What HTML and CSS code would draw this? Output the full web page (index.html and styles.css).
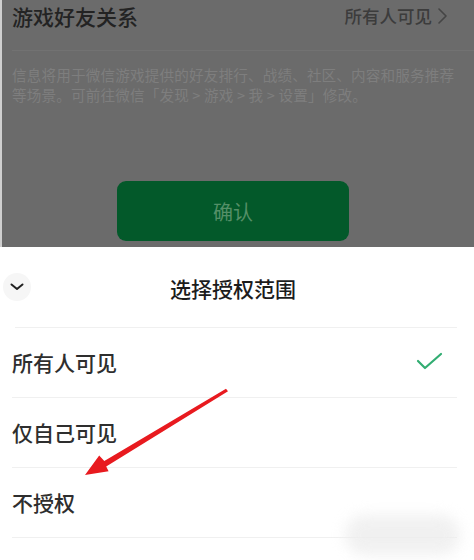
FILE: index.html
```html
<!DOCTYPE html>
<html lang="zh-CN">
<head>
<meta charset="utf-8">
<title>选择授权范围</title>
<link rel="stylesheet" href="styles.css">
</head>
<body>
<div class="screen">
  <section class="backdrop">
    <div class="setting-row">
      <span class="setting-title">游戏好友关系</span>
      <span class="setting-value">所有人可见 <svg class="caret" width="9" height="16" viewBox="0 0 9 16"><polyline points="1,1 8,8 1,15" fill="none" stroke="#454545" stroke-width="1.6" stroke-linecap="round" stroke-linejoin="round"/></svg></span>
    </div>
    <div class="setting-line"></div>
    <p class="setting-desc">信息将用于微信游戏提供的好友排行、战绩、社区、内容和服务推荐<br>等场景。可前往微信「发现 &gt; 游戏 &gt; 我 &gt; 设置」修改。</p>
    <div class="confirm-wrap">
      <div class="confirm-btn">确认</div>
    </div>
  </section>

  <section class="sheet">
    <div class="sheet-header">
      <div class="collapse">
        <svg width="14" height="8" viewBox="0 0 14 8"><polyline points="1.5,1.5 7,6 12.5,1.5" fill="none" stroke="#222" stroke-width="2" stroke-linecap="round" stroke-linejoin="round"/></svg>
      </div>
      <div class="sheet-title">选择授权范围</div>
      <div class="spacer"></div>
    </div>
    <div class="header-line"></div>
    <div class="option">
      <span>所有人可见</span>
      <svg class="check" width="28" height="20" viewBox="0 0 28 20"><polyline points="2,9 9,16 25,2" fill="none" stroke="#32ad72" stroke-width="2.2" stroke-linecap="round" stroke-linejoin="round"/></svg>
    </div>
    <div class="option"><span>仅自己可见</span></div>
    <div class="option"><span>不授权</span></div>
  </section>

  <div class="watermark"></div>

  <svg class="annotation" width="474" height="560" viewBox="0 0 474 560">
    <polygon points="226,388.8 104.3,460.9 99.2,455.6 85,475 108.6,471.3 106.2,466.4 228,391.2" fill="#e81a1f"/>
  </svg>
</div>
</body>
</html>
```

FILE: styles.css
```css
* { box-sizing: border-box; }

html, body {
  margin: 0;
  padding: 0;
  background: #ffffff;
}

body {
  font-family: "Noto Sans CJK SC", "Noto Sans", sans-serif;
}

.screen {
  position: relative;
  width: 474px;
  height: 560px;
  overflow: hidden;
  background: #ffffff;
}

.backdrop {
  height: 247px;
  background: #6b6b6b;
  border-left: 2px solid #cfcfcf;
  display: flex;
  flex-direction: column;
}

.setting-row {
  display: flex;
  justify-content: space-between;
  align-items: center;
  height: 32px;
  padding: 0 27px 0 10px;
}

.setting-title {
  font-size: 21px;
  line-height: 32px;
  font-weight: 500;
  color: #232323;
}

.setting-value {
  font-size: 17.5px;
  line-height: 32px;
  font-weight: 500;
  color: #3c3c3c;
  display: flex;
  align-items: center;
  gap: 6px;
}

.caret {
  display: block;
}

.setting-line {
  height: 1px;
  margin: 18px 0 0 10px;
  background: #727272;
}

.setting-desc {
  margin: 14px 0 0 10px;
  font-size: 14.6px;
  letter-spacing: 0.15px;
  line-height: 20px;
  color: #7e7e7e;
  white-space: nowrap;
}

.confirm-wrap {
  display: flex;
  justify-content: center;
  margin-top: 76px;
  padding-right: 10px;
}

.confirm-btn {
  width: 232px;
  height: 60px;
  border-radius: 9px;
  background: #03592a;
  color: #558f67;
  font-size: 20px;
  display: flex;
  align-items: center;
  justify-content: center;
}

.sheet {
  background: #ffffff;
}

.sheet-header {
  display: grid;
  grid-template-columns: 60px 1fr 60px;
  align-items: center;
  height: 80px;
}

.collapse {
  width: 28px;
  height: 28px;
  margin-left: 3px;
  border-radius: 50%;
  background: #f6f6f6;
  display: flex;
  align-items: center;
  justify-content: center;
}

.sheet-title {
  text-align: center;
  font-size: 21px;
  font-weight: 500;
  color: #1c1c1c;
  padding: 1px 8px 0 0;
}

.header-line {
  height: 1px;
  margin: 0 17px 0 15px;
  background: #f0f0f0;
}

.option {
  display: flex;
  justify-content: space-between;
  align-items: center;
  height: 70px;
  margin: 0 17px 0 12px;
  border-bottom: 1px solid #f0f0f0;
  font-size: 21px;
  font-weight: 500;
  color: #2e2e2e;
  padding-bottom: 1px;
}

.check {
  margin-right: 13px;
}

.watermark {
  position: absolute;
  left: 345px;
  top: 515px;
  width: 115px;
  height: 40px;
  border-radius: 20px;
  background: #ededed;
  filter: blur(7px);
  opacity: 0.8;
}

.annotation {
  position: absolute;
  left: 0;
  top: 0;
  pointer-events: none;
}
```
